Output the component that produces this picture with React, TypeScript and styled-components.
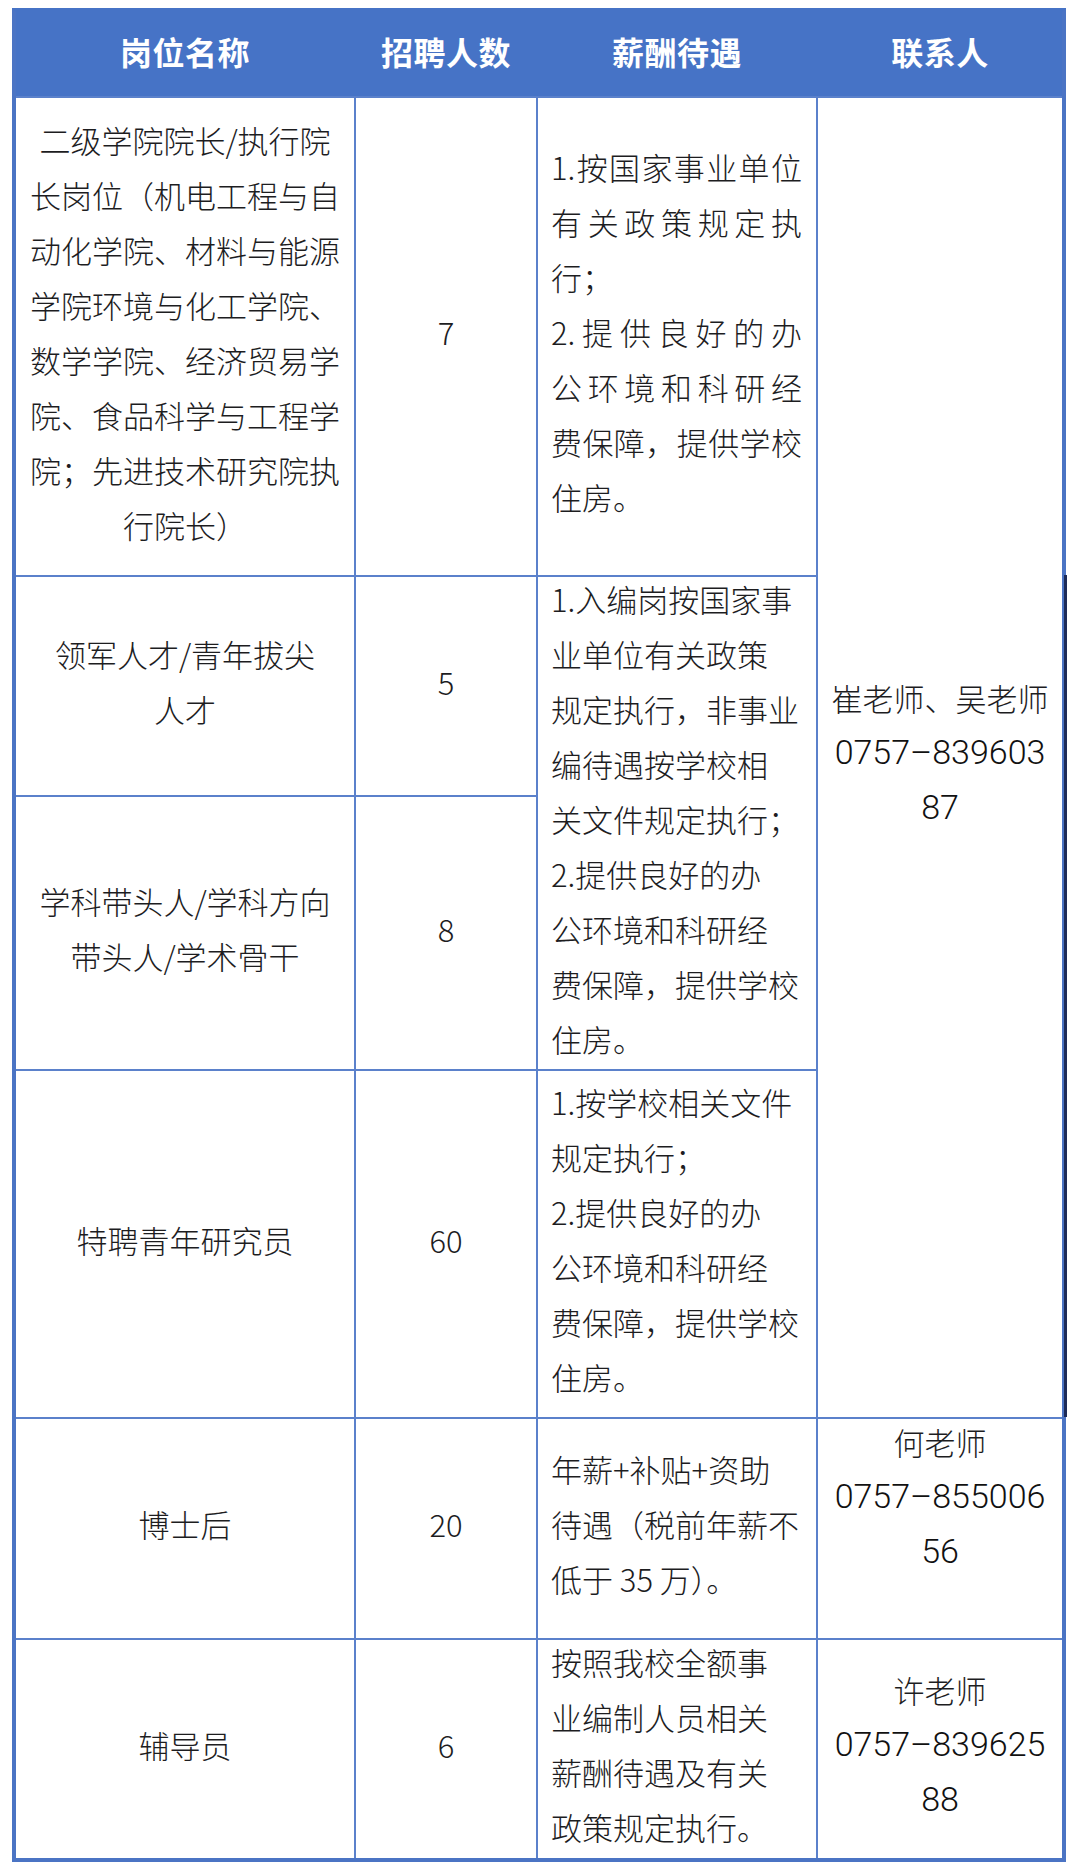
import React from 'react'
import styled, { createGlobalStyle } from 'styled-components'

const GlobalStyle = createGlobalStyle`
    html, body {
        margin: 0;
        padding: 0;
        background: #ffffff;
    }
    body {
        font-family: "Noto Sans CJK SC", "Noto Sans", sans-serif;
        color: #1d1d1f;
    }
`

const Page = styled.div`
    width: 1080px;
    box-sizing: border-box;
    padding: 8px 14px 12px 12px;
`

const Table = styled.div`
    position: relative;
    display: grid;
    grid-template-columns: 338px 180px 278px 244px;
    grid-template-rows: 84px 477px 218px 272px 346px 219px 218px;
    gap: 2px;
    width: 1054px;
    box-sizing: border-box;
    border: 4px solid #4b74c4;
    border-top-color: #4673c6;
    background: #5b81cb;
`

const HeadCell = styled.div<{ $last?: boolean }>`
    display: flex;
    align-items: center;
    justify-content: center;
    padding-bottom: 6px;
    background: #4673c6;
    color: #ffffff;
    font-size: 32px;
    font-weight: 700;
    letter-spacing: 0.5px;
    box-shadow: ${({ $last }) => ($last ? 'none' : '2px 0 0 #4673c6')};
`

type CellProps = {
    $col: number
    $row: number
    $span?: number
    $left?: boolean
    $top?: boolean
}

const Cell = styled.div<CellProps>`
    grid-column: ${({ $col }) => $col};
    grid-row: ${({ $row, $span = 1 }) => `${$row} / span ${$span}`};
    display: flex;
    flex-direction: column;
    justify-content: ${({ $top }) => ($top ? 'flex-start' : 'center')};
    align-items: ${({ $left }) => ($left ? 'stretch' : 'center')};
    box-sizing: border-box;
    padding: ${({ $left, $top }) =>
        $top ? '0' : $left ? '0 14px 10px 13px' : '0 0 10px 0'};
    background: #ffffff;
    font-size: 31px;
    font-weight: 300;
    line-height: 55px;
    text-align: ${({ $left }) => ($left ? 'left' : 'center')};
    overflow: visible;
`

const Line = styled.span<{ $justify?: boolean }>`
    display: block;
    white-space: nowrap;
    ${({ $justify }) =>
        $justify &&
        `
        text-align: justify;
        text-align-last: justify;
        text-justify: inter-character;
    `}
`

const TopLine = styled(Line)`
    margin-top: -5px;
`

const Phone = styled.span`
    display: block;
    white-space: nowrap;
    font-family: Roboto, "Liberation Sans", sans-serif;
    font-size: 34px;
    font-weight: 300;
    color: #111;
`

// dark seam on the right edge, left over from the stitched screenshot
const Seam = styled.div`
    position: absolute;
    top: 563px;
    right: -5px;
    width: 3px;
    height: 842px;
    background: #1d2b58;
`

const headers = ['岗位名称', '招聘人数', '薪酬待遇', '联系人']

type Text = { t: string; j?: boolean }

const Lines = ({ items }: { items: Text[] }) => (
    <>
        {items.map((l, i) => (
            <Line key={i} $justify={l.j}>
                {l.t}
            </Line>
        ))}
    </>
)

const salaryStd: Text[] = [
    { t: '2.提供良好的办' },
    { t: '公环境和科研经' },
    { t: '费保障，提供学校' },
    { t: '住房。' },
]

const App = () => {
    return (
        <Page>
            <GlobalStyle />
            <Table>
                {headers.map((h, i) => (
                    <HeadCell key={h} $last={i === headers.length - 1}>
                        {h}
                    </HeadCell>
                ))}

                {/* 二级学院院长 */}
                <Cell $col={1} $row={2}>
                    <Lines
                        items={[
                            { t: '二级学院院长/执行院' },
                            { t: '长岗位（机电工程与自' },
                            { t: '动化学院、材料与能源' },
                            { t: '学院环境与化工学院、' },
                            { t: '数学学院、经济贸易学' },
                            { t: '院、食品科学与工程学' },
                            { t: '院；先进技术研究院执' },
                            { t: '行院长）' },
                        ]}
                    />
                </Cell>
                <Cell $col={2} $row={2}>7</Cell>
                <Cell $col={3} $row={2} $left>
                    <Lines
                        items={[
                            { t: '1.按国家事业单位', j: true },
                            { t: '有关政策规定执', j: true },
                            { t: '行；' },
                            { t: '2.提供良好的办', j: true },
                            { t: '公环境和科研经', j: true },
                            { t: '费保障，提供学校', j: true },
                            { t: '住房。' },
                        ]}
                    />
                </Cell>
                <Cell $col={4} $row={2} $span={4}>
                    <Line>崔老师、吴老师</Line>
                    <Phone>0757–839603</Phone>
                    <Phone>87</Phone>
                </Cell>

                {/* 领军人才 */}
                <Cell $col={1} $row={3}>
                    <Lines items={[{ t: '领军人才/青年拔尖' }, { t: '人才' }]} />
                </Cell>
                <Cell $col={2} $row={3}>5</Cell>
                <Cell $col={3} $row={3} $span={2} $left>
                    <Lines
                        items={[
                            { t: '1.入编岗按国家事' },
                            { t: '业单位有关政策' },
                            { t: '规定执行，非事业' },
                            { t: '编待遇按学校相' },
                            { t: '关文件规定执行；' },
                            ...salaryStd,
                        ]}
                    />
                </Cell>

                {/* 学科带头人 */}
                <Cell $col={1} $row={4}>
                    <Lines
                        items={[
                            { t: '学科带头人/学科方向' },
                            { t: '带头人/学术骨干' },
                        ]}
                    />
                </Cell>
                <Cell $col={2} $row={4}>8</Cell>

                {/* 特聘青年研究员 */}
                <Cell $col={1} $row={5}>特聘青年研究员</Cell>
                <Cell $col={2} $row={5}>60</Cell>
                <Cell $col={3} $row={5} $left>
                    <Lines
                        items={[
                            { t: '1.按学校相关文件' },
                            { t: '规定执行；' },
                            ...salaryStd,
                        ]}
                    />
                </Cell>

                {/* 博士后 */}
                <Cell $col={1} $row={6}>博士后</Cell>
                <Cell $col={2} $row={6}>20</Cell>
                <Cell $col={3} $row={6} $left>
                    <Lines
                        items={[
                            { t: '年薪+补贴+资助' },
                            { t: '待遇（税前年薪不' },
                            { t: '低于 35 万）。' },
                        ]}
                    />
                </Cell>
                <Cell $col={4} $row={6} $top>
                    <TopLine>何老师</TopLine>
                    <Phone>0757–855006</Phone>
                    <Phone>56</Phone>
                </Cell>

                {/* 辅导员 */}
                <Cell $col={1} $row={7}>辅导员</Cell>
                <Cell $col={2} $row={7}>6</Cell>
                <Cell $col={3} $row={7} $left>
                    <Lines
                        items={[
                            { t: '按照我校全额事' },
                            { t: '业编制人员相关' },
                            { t: '薪酬待遇及有关' },
                            { t: '政策规定执行。' },
                        ]}
                    />
                </Cell>
                <Cell $col={4} $row={7}>
                    <Line>许老师</Line>
                    <Phone>0757–839625</Phone>
                    <Phone>88</Phone>
                </Cell>

                <Seam />
            </Table>
        </Page>
    )
}

export default App
